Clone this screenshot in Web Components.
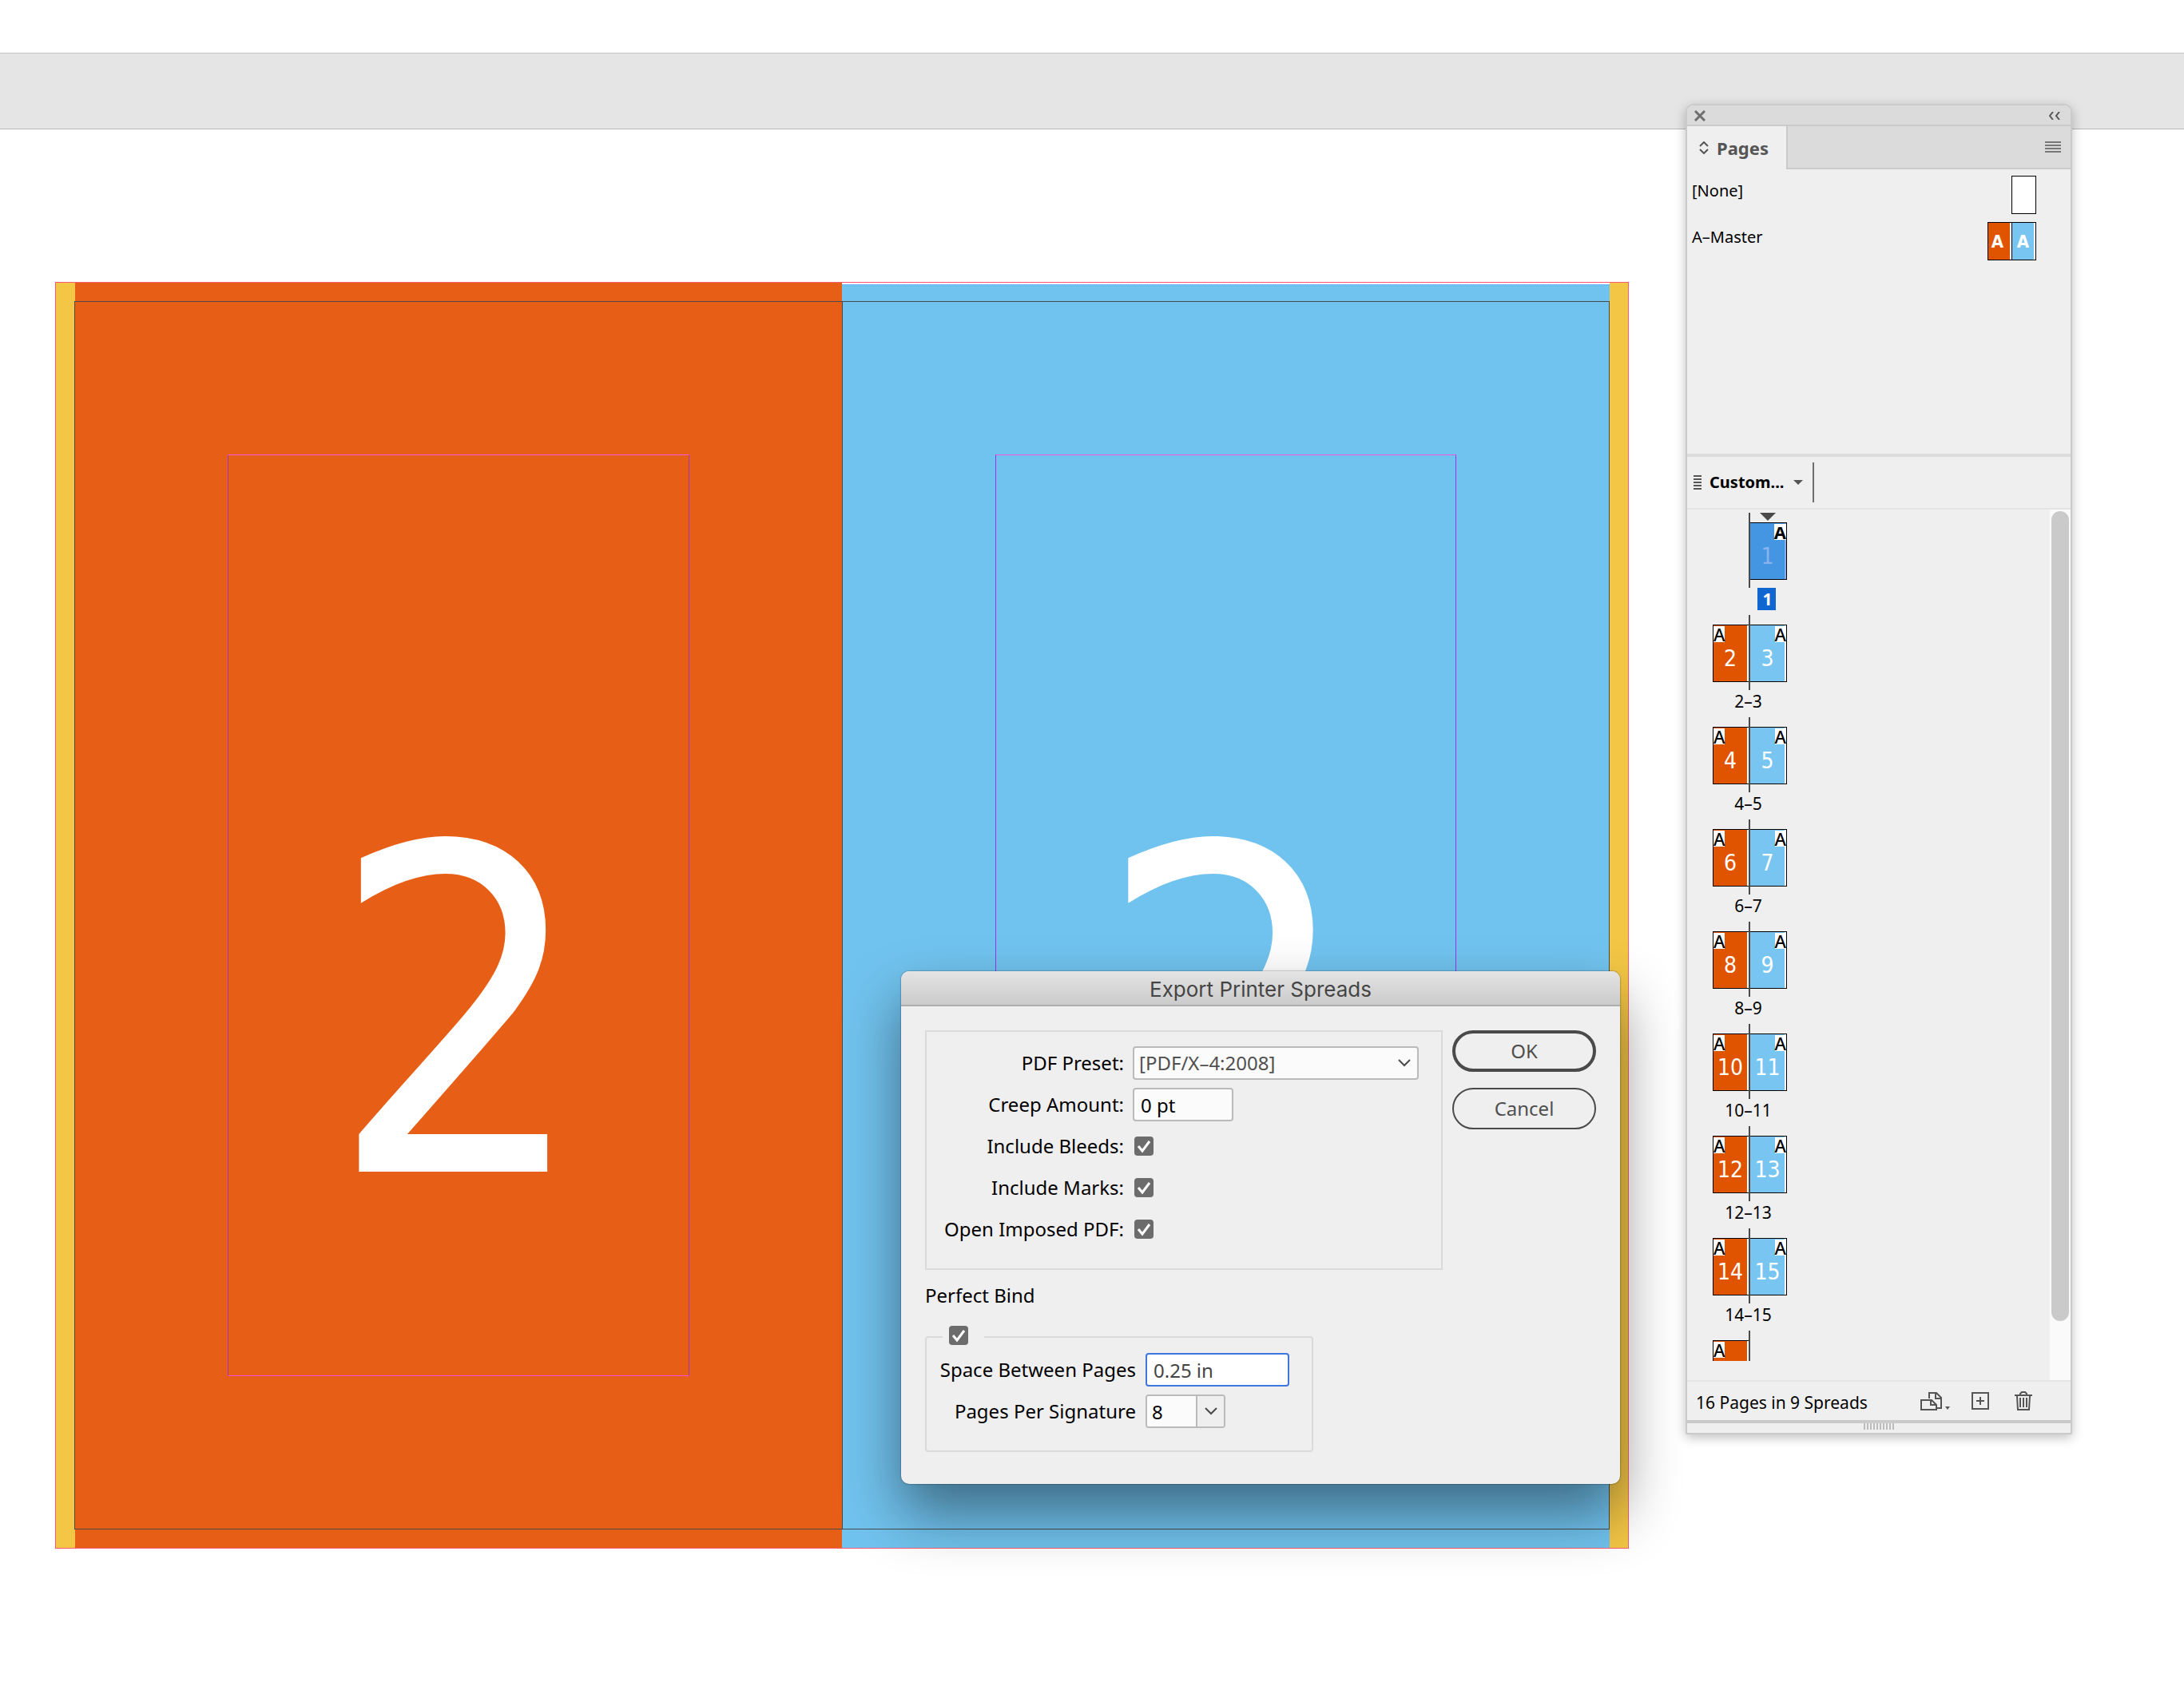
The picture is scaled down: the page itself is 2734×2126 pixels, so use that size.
<!DOCTYPE html>
<html lang="en">
<head>
<meta charset="utf-8">
<title>Export Printer Spreads</title>
<style>
html, body {
    margin: 0;
    min-height: 100vh;
    background: #fff;
    font-family: "Noto Sans", "Open Sans", sans-serif;
}
</style>
</head>
<body>
<layout-app>
    <layout-spread></layout-spread>
    <export-dialog></export-dialog>
    <pages-panel></pages-panel>
</layout-app>

<script>
customElements.define('layout-app', class extends HTMLElement {

    constructor() {
        super();
        let shadowRoot = this.attachShadow({ mode: 'open' });
        shadowRoot.innerHTML = `
        <style>
        :host {
            display: flex;
            flex-direction: column;
            min-height: 100vh;
            padding-top: 66px;
            box-sizing: border-box;
            position: relative;
            overflow: hidden;
        }
        header {
            height: 94px;
            background: #e5e5e5;
            border-top: 1px solid #c6c6c6;
            border-bottom: 1px solid #b8b8b8;
        }
        main {
            flex: 1;
        }
        /* windows float over the pasteboard */
        ::slotted(*) {
            position: absolute;
        }
        ::slotted(layout-spread) {
            left: 69px;
            top: 353px;
        }
        ::slotted(export-dialog) {
            left: 1128px;
            top: 1216px;
        }
        ::slotted(pages-panel) {
            left: 2110px;
            top: 130px;
        }
        </style>
        <header></header>
        <main><slot></slot></main>
        `;
    }

});

customElements.define('layout-spread', class extends HTMLElement {

    constructor() {
        super();
        let shadowRoot = this.attachShadow({ mode: 'open' });
        shadowRoot.innerHTML = `
        <style>
        :host {
            display: grid;
            grid-template-columns: 24px 960px 961px 23px;
            width: 1968px;
            height: 1584px;
            border: 1px solid #fa5a6e;
            background: #f3c645;
        }
        .page {
            grid-row: 1;
            display: grid;
            padding: 215px 191px;
            color: #fff;
            font: 566px/1 "DejaVu Sans Condensed", "DejaVu Sans", sans-serif;
        }
        .left {
            grid-column: 2;
            background: #e75e17;
        }
        .right {
            grid-column: 3;
            background: #71c3ef;
            border-top: 1px dotted #5a9cff;
            margin-top: 2px;
            padding: 212px 192px 215px;
            box-shadow: 0 -2px #fff;
        }
        .margins {
            display: grid;
            justify-content: center;
            align-content: start;
            padding-top: 418px;
            border: 1px solid #9a35e8;
            border-top-color: #f25ae0;
            border-bottom-color: #fa48e0;
        }
        .left .margins {
            border-left-color: #a038b8;
            border-right-color: #a038b8;
        }
        .trim {
            position: absolute;
            left: 23px;
            top: 23px;
            right: 23px;
            bottom: 23px;
            border: 1px solid #4a4a4a;
        }
        .trim::after {
            content: "";
            position: absolute;
            left: 960px;
            top: 0;
            bottom: 0;
            border-left: 1px solid #4a4a4a;
        }
        </style>
        <div class="page left"><div class=margins><span>2</span></div></div>
        <div class="page right"><div class=margins><span>2</span></div></div>
        <div class=trim></div>
        `;
    }

});

customElements.define('export-dialog', class extends HTMLElement {

    constructor() {
        super();
        let shadowRoot = this.attachShadow({ mode: 'open' });
        shadowRoot.innerHTML = `
        <style>
        :host {
            display: block;
            width: 900px;
            border-radius: 10px;
            background: #efefef;
            color: #000;
            font-size: 24px;
            line-height: 32px;
            box-shadow: 0 0 2px rgba(0,0,0,.6), 0 36px 72px rgba(0,0,0,.46);
        }
        h1 {
            margin: 0;
            height: 42px;
            border-bottom: 2px solid #adadad;
            border-radius: 10px 10px 0 0;
            background: linear-gradient(#e4e4e4, #cbcbcb);
            color: #454545;
            font: 26px/46px Inter, Roboto, sans-serif;
            text-align: center;
        }
        form {
            display: grid;
            grid-template-columns: 1fr 180px;
            gap: 12px;
            padding: 30px 30px 40px;
        }
        .group {
            border: 2px solid #dadada;
            padding: 18px 0 28px;
        }
        .rows {
            display: grid;
            grid-template-columns: 247px 1fr;
            grid-auto-rows: 42px;
            gap: 10px 11px;
            align-items: center;
        }
        label {
            text-align: right;
            white-space: nowrap;
        }
        h2 {
            margin: 16px 0 22px;
            font: inherit;
        }
        fieldset {
            width: 486px;
            box-sizing: border-box;
            margin: 0;
            min-width: 0;
            border: 2px solid #dadada;
            border-radius: 4px;
            padding: 6px 0 28px;
        }
        fieldset .rows {
            grid-template-columns: 262px 1fr;
            column-gap: 12px;
        }
        legend {
            display: flex;
            height: 28px;
            margin-left: 20px;
            padding: 0 18px 0 6px;
        }
        input, select, .combo {
            box-sizing: border-box;
            height: 42px;
            margin: 0;
            border: 2px solid #bababa;
            border-radius: 4px;
            background: #fbfbfb;
            color: #000;
            font: inherit;
            padding: 0 8px;
            outline: 0;
        }
        #creep { width: 126px; }
        #space {
            width: 180px;
            border-color: #3f76de;
            background: #fff;
            color: #444;
        }
        .select {
            display: grid;
            width: 358px;
            align-items: center;
        }
        .select > * { grid-area: 1/1; }
        .select svg {
            justify-self: end;
            margin-right: 10px;
            pointer-events: none;
        }
        select {
            appearance: none;
            width: 100%;
            padding: 0 6px;
            color: #505050;
        }
        .combo {
            display: grid;
            grid-template-columns: 61px 1fr;
            width: 100px;
            padding: 0;
            overflow: hidden;
        }
        .combo input {
            width: 61px;
            height: 38px;
            border: 0;
            border-radius: 0;
            padding: 0 6px;
        }
        .combo button {
            display: grid;
            place-items: center;
            border: 0;
            border-left: 2px solid #bababa;
            padding: 0;
            background: #efefef;
        }
        .check {
            display: grid;
            width: 24px;
            height: 24px;
            margin: 0 2px;
        }
        .check > * { grid-area: 1/1; }
        .check input {
            appearance: none;
            width: 24px;
            height: 24px;
            border: 0;
            padding: 0;
            background: #6c6c6c;
        }
        .check svg { pointer-events: none; }
        path {
            fill: none;
            stroke: #4a4a4a;
            stroke-width: 2;
        }
        .check path {
            stroke: #fff;
            stroke-width: 3;
        }
        .buttons {
            display: flex;
            flex-direction: column;
            gap: 20px;
        }
        .buttons button {
            height: 52px;
            border: 2px solid #4a4a4a;
            border-radius: 26px;
            background: none;
            color: #4f4f4f;
            font: inherit;
        }
        .buttons button:first-child { border-width: 4px; }
        </style>
        <h1>Export Printer Spreads</h1>
        <form>
            <div>
                <div class="group rows">
                    <label for=preset>PDF Preset:</label>
                    <div class=select>
                        <select id=preset><option>[PDF/X–4:2008]</option></select>
                        <svg width=16 height=10><path d="M1 1l7 7 7-7"/></svg>
                    </div>
                    <label for=creep>Creep Amount:</label>
                    <input id=creep value="0 pt">
                    <label for=bleeds>Include Bleeds:</label>
                    <span class=check data-id=bleeds></span>
                    <label for=marks>Include Marks:</label>
                    <span class=check data-id=marks></span>
                    <label for=open>Open Imposed PDF:</label>
                    <span class=check data-id=open></span>
                </div>
                <h2 id=bind>Perfect Bind</h2>
                <fieldset aria-labelledby=bind>
                    <legend><span class=check data-id=perfect></span></legend>
                    <div class=rows>
                        <label for=space>Space Between Pages</label>
                        <input id=space value="0.25 in">
                        <label for=signature>Pages Per Signature</label>
                        <div class=combo>
                            <input id=signature value=8>
                            <button type=button aria-label="Show values"><svg width=16 height=10><path d="M1 1l7 7 7-7"/></svg></button>
                        </div>
                    </div>
                </fieldset>
            </div>
            <div class=buttons>
                <button type=button>OK</button>
                <button type=button>Cancel</button>
            </div>
        </form>
        `;
        for (let box of shadowRoot.querySelectorAll('.check')) {
            box.innerHTML = `
            <input type=checkbox id=${box.dataset.id} checked>
            <svg width=24 height=24><path d="M5 12l5 6 9-12"/></svg>`;
        }
        shadowRoot.querySelector('#perfect').setAttribute('aria-labelledby', 'bind');
    }

});

// One row of the page list. left/right are page numbers, an empty value
// draws the page without its number.
customElements.define('page-thumbs', class extends HTMLElement {

    constructor() {
        super();
        this.attachShadow({ mode: 'open' });
    }

    connectedCallback() {
        const left = this._page('left');
        const right = this._page('right');
        this.shadowRoot.innerHTML = `
        <style>
        :host {
            display: grid;
            grid-template-columns: 46px 47px;
            grid-template-rows: 72px 28px;
            row-gap: 10px;
            width: 93px;
            padding: 12px 0 6px;
            position: relative;
        }
        .page {
            grid-row: 1;
            display: grid;
            place-items: center;
            position: relative;
            box-sizing: border-box;
            padding: 14px 2px 0 0;
            border: 1px solid #000;
            color: #fff;
            font: 28px/32px "DejaVu Sans Condensed", "DejaVu Sans", sans-serif;
        }
        .left {
            grid-column: 1;
            background: #e05400;
            box-shadow: inset -2px 0 #fff;
        }
        .right {
            grid-column: 2;
            background: #78c5f2;
            box-shadow: inset -2px 0 #fff;
        }
        b {
            position: absolute;
            top: 1px;
            background: #fff;
            color: #000;
            font: 500 22px/20px "Noto Sans", sans-serif;
        }
        .left b { left: 0; }
        .right b { right: 0; }
        .spine {
            position: absolute;
            left: 45px;
            top: 0;
            width: 2px;
            height: 94px;
            background: #4a4a4a;
        }
        .label {
            grid-area: 2/1/3/3;
            justify-self: center;
            margin-right: 4px;
            font-size: 21px;
            line-height: 28px;
        }
        :host([current]) .right {
            background: #4495e2;
            box-shadow: inset -2px 0 #82b0ea;
            color: #8ab4ec;
        }
        :host([current]) b { font-weight: 700; }
        :host([current]) .label {
            grid-column: 2;
            padding: 0 4px 0 6px;
            background: #0f66d0;
            color: #fff;
            font-weight: 700;
        }
        svg {
            display: none;
            position: absolute;
            left: 59px;
            top: 0;
        }
        :host([current]) svg { display: block; }
        </style>
        ${left}${right}
        <div class=spine></div>
        <svg width=20 height=10><path d="M0 0h20L10 10z" fill="#4a4a4a"/></svg>
        <span class=label>${this.getAttribute('label') || ''}</span>
        `;
    }

    _page(side) {
        if (!this.hasAttribute(side)) return '';
        return `<div class="page ${side}"><b>A</b>${this.getAttribute(side)}</div>`;
    }

});

customElements.define('pages-panel', class extends HTMLElement {

    constructor() {
        super();
        let shadowRoot = this.attachShadow({ mode: 'open' });
        let spreads = '<page-thumbs current right=1 label=1></page-thumbs>';
        for (let i = 2; i < 16; i += 2) {
            spreads += `<page-thumbs left=${i} right=${i + 1} label="${i}–${i + 1}"></page-thumbs>`;
        }
        spreads += '<page-thumbs left></page-thumbs>';
        shadowRoot.innerHTML = `
        <style>
        :host {
            display: flex;
            flex-direction: column;
            width: 480px;
            border: 2px solid #cacaca;
            border-radius: 10px 10px 2px 2px;
            background: #efefef;
            color: #000;
            font-size: 20px;
            line-height: 28px;
            box-shadow: 0 4px 14px rgba(0,0,0,.25);
        }
        button {
            display: flex;
            align-items: center;
            border: 0;
            padding: 0;
            background: none;
            color: inherit;
            font: inherit;
        }
        path {
            fill: none;
            stroke: #555;
            stroke-width: 2;
        }
        .title, .tabs {
            display: flex;
            justify-content: space-between;
            background: #dbdbdb;
            border-bottom: 2px solid #cacaca;
        }
        .title {
            height: 22px;
            padding: 2px 13px 0 9px;
            border-radius: 8px 8px 0 0;
        }
        .tabs {
            height: 52px;
            padding-right: 12px;
        }
        .tab {
            width: 124px;
            height: 54px;
            box-sizing: content-box;
            border-right: 2px solid #cacaca;
            background: #efefef;
            color: #555;
            font-size: 22px;
            font-weight: 700;
            gap: 10px;
        }
        .tab svg { margin-left: 15px; }
        .masters {
            height: 348px;
            padding: 8px 43px 0 6px;
            border-bottom: 4px solid #dcdcdc;
        }
        .master {
            display: flex;
            justify-content: space-between;
            height: 48px;
            margin-bottom: 10px;
            line-height: 38px;
        }
        .thumbs { display: flex; }
        .thumbs span {
            display: grid;
            place-items: center;
            box-sizing: border-box;
            width: 31px;
            border: 1px solid #000;
            background: #fff;
        }
        .thumbs span + span { margin-left: -1px; }
        .thumbs .a {
            padding: 2px 6px 0 0;
            background: #e05400;
            box-shadow: inset -2px 0 #fff;
            color: #fff;
            font: 700 22px/1 "DejaVu Sans Condensed", "DejaVu Sans", sans-serif;
        }
        .thumbs .a + .a {
            padding-right: 2px;
            background: #78c5f2;
        }
        .sizes {
            display: flex;
            height: 64px;
            align-items: center;
            padding-left: 8px;
            border-bottom: 2px solid #e4e4e4;
        }
        .sizes button {
            height: 50px;
            padding-right: 12px;
            border-right: 2px solid #6e6e6e;
            font-weight: 700;
        }
        .sizes button span { margin: 0 12px 0 10px; }
        .list {
            display: flex;
            justify-content: space-between;
            height: 1090px;
            border-bottom: 2px solid #e4e4e4;
        }
        .scroll {
            height: 1062px;
            margin-top: 4px;
            padding-left: 32px;
            overflow: hidden;
        }
        .track {
            padding: 2px;
            background: #fafafa;
        }
        .thumb {
            width: 22px;
            height: 1014px;
            border-radius: 11px;
            background: #cacaca;
        }
        footer {
            display: flex;
            height: 48px;
            align-items: center;
            padding: 0 48px 0 11px;
            gap: 32px;
            border-bottom: 4px solid #cacaca;
        }
        footer span {
            flex: 1;
            padding-top: 4px;
            font-size: 21px;
        }
        footer svg { overflow: visible; }
        .grip {
            height: 8px;
            width: 38px;
            margin: 0 auto 4px;
            background: repeating-linear-gradient(90deg, #bdbdbd 0 2px, transparent 2px 4px);
        }
        </style>
        <div class=title>
            <button aria-label="Close"><svg width=14 height=14><path d="M1 1l12 12M13 1L1 13" style="stroke:#6e6e6e;stroke-width:3"/></svg></button>
            <button aria-label="Collapse"><svg width=14 height=10><path d="M5 0L1 5l4 5M13 0L9 5l4 5"/></svg></button>
        </div>
        <div class=tabs>
            <button class=tab><svg width=12 height=16><path d="M1 6l5-5 5 5M1 10l5 5 5-5"/></svg>Pages</button>
            <button aria-label="Panel menu"><svg width=20 height=14><path d="M0 1h20M0 5h20M0 9h20M0 13h20" style="stroke:#777"/></svg></button>
        </div>
        <div class=masters>
            <div class=master>[None]<div class=thumbs><span></span></div></div>
            <div class=master>A–Master<div class=thumbs><span class=a>A</span><span class=a>A</span></div></div>
        </div>
        <div class=sizes>
            <button>
                <svg width=10 height=18><path d="M0 1h10M0 5h10M0 9h10M0 13h10M0 17h10"/></svg>
                <span>Custom...</span>
                <svg width=12 height=6><path d="M0 0h12L6 6z" style="fill:#555;stroke:none"/></svg>
            </button>
        </div>
        <div class=list>
            <div class=scroll>${spreads}</div>
            <div class=track><div class=thumb></div></div>
        </div>
        <footer>
            <span>16 Pages in 9 Spreads</span>
            <button aria-label="Edit page size"><svg width=32 height=24>
                <path d="M11 9V2h9l6 6v13h-5M19 2v7h7M1 11h13l6 6v6H1zM13 11v6h7"/>
                <path d="M31 19h6l-3 4z" style="fill:#555;stroke:none"/>
            </svg></button>
            <button aria-label="New page"><svg width=22 height=24><path d="M1 2h20v20H1zM6 12h10M11 7v10"/></svg></button>
            <button aria-label="Delete page"><svg width=22 height=24><path d="M0 5h22M7 5V3l2-2h4l2 2v2M3 6l1 17h14l1-17M7 8v12M11 8v12M15 8v12"/></svg></button>
        </footer>
        <div class=grip></div>
        `;
    }

});
</script>
</body>
</html>
